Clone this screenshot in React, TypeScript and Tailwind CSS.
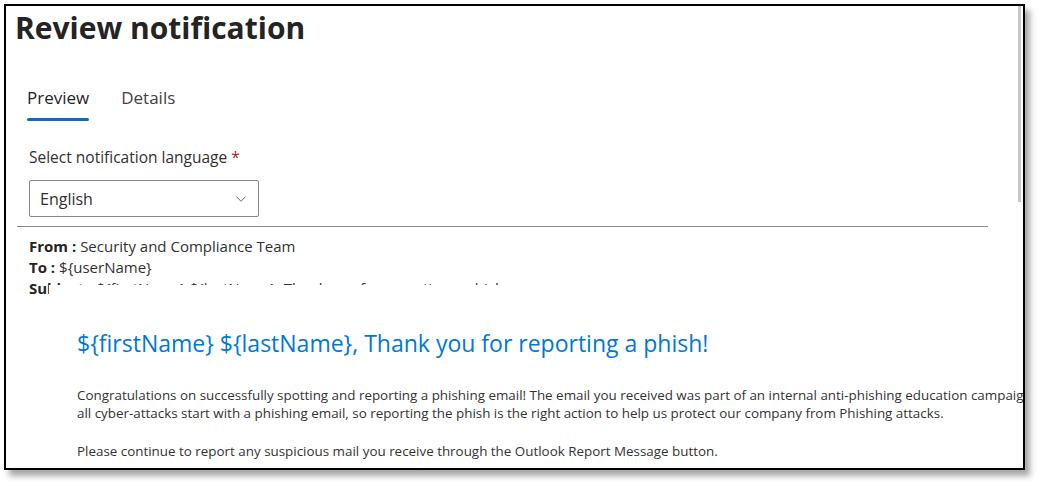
import { ChevronDown } from "lucide-react";

const FONT = "font-['Segoe_UI','Open_Sans','Noto_Sans',sans-serif]";

function LanguageSelect() {
  return (
    <div className="flex h-[37px] w-[230px] items-center justify-between rounded-[2px] border border-[#8a8886] pl-[10px] pr-[8px]">
      <span className="text-[16px] text-[#323130]">English</span>
      <ChevronDown className="h-[18px] w-[18px] text-[#605e5c]" strokeWidth={1.2} />
    </div>
  );
}

// the preview frame sits over the bottom of the subject line, as in the portal
function EmailBody() {
  return (
    <div className="relative z-10 -mt-[14px] ml-[43px] bg-white pt-[42px] pl-[28px] whitespace-nowrap">
      <h2 className="text-[23px] leading-[32px] text-[#0078d4]">
        {"${firstName} ${lastName}, Thank you for reporting a phish!"}
      </h2>
      <div className="mt-[27px] text-[13.4px] leading-[18px] text-[#333333]">
        <p>
          Congratulations on successfully spotting and reporting a phishing email! The email you received was part of an
          internal anti-phishing education campaign. Almost
        </p>
        <p>
          all cyber-attacks start with a phishing email, so reporting the phish is the right action to help us protect our
          company from Phishing attacks.
        </p>
        <p className="mt-[20px]">Please continue to report any suspicious mail you receive through the Outlook Report Message button.</p>
      </div>
    </div>
  );
}

export default function App() {
  return (
    <div className={`h-[484px] w-[1038px] bg-white p-[4px] ${FONT}`}>
      <div className="relative h-[466px] w-[1021px] overflow-hidden border-2 border-black bg-white shadow-[5px_6px_6px_rgba(0,0,0,0.35)]">
        <div className="absolute right-[2px] top-0 h-[196px] w-[3px] bg-[#c8c8c8]" />
        <div className="pl-[9px] pt-[2px]">
          <h1 className="text-[30px] font-bold leading-[40px] text-[#242424]">Review notification</h1>
        </div>
        <div className="mt-[38px] flex gap-[32px] pl-[21px] text-[17px] text-[#242424]">
          <div className="flex flex-col">
            <span className="leading-[24px]">Preview</span>
            <span className="mt-[8px] h-[3px] rounded-full bg-[#0f6cbd]" />
          </div>
          <span className="leading-[24px] text-[#424242]">Details</span>
        </div>
        <div className="pl-[23px] pt-[25px]">
          <p className="text-[15.5px] leading-[22px] text-[#323130]">
            Select notification language <span className="text-[#a4262c]">*</span>
          </p>
          <div className="mt-[12px]">
            <LanguageSelect />
          </div>
        </div>
        <div className="ml-[11px] mt-[9px] h-px w-[971px] bg-[#8a8a8a]" />
        <div className="pl-[23px] pt-[9px] text-[15px] leading-[21px] text-[#323130]">
          <p>
            <b className="font-bold text-[#242424]">From :</b> Security and Compliance Team
          </p>
          <p>
            <b className="font-bold text-[#242424]">To :</b> {"${userName}"}
          </p>
          <p className="whitespace-nowrap">
            <b className="font-bold text-[#242424]">Subject :</b> {"${firstName} ${lastName}, Thank you for reporting a phish"}
          </p>
        </div>
        <EmailBody />
      </div>
    </div>
  );
}
